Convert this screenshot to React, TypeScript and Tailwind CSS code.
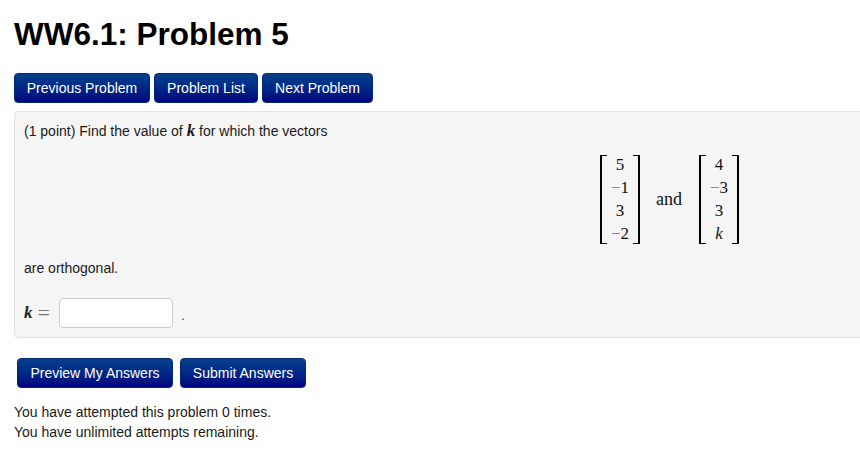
const sans = "font-['Liberation_Sans',Arial,sans-serif]";
const math = "font-['Liberation_Serif','Times_New_Roman',serif]";

function NavButton({ label, className = "" }: { label: string; className?: string }) {
  return (
    <button
      type="button"
      className={`h-[30px] rounded-[4px] border border-[#002a6e] bg-gradient-to-b from-[#0a3f8c] to-[#00007f] text-center text-[14px] leading-[20px] text-white ${className}`}
    >
      {label}
    </button>
  );
}

function Matrix({ rows, className = "" }: { rows: React.ReactNode[]; className?: string }) {
  return (
    <div className={`relative flex h-[89px] flex-col items-center justify-center ${className}`}>
      <span className="absolute left-0 top-0 h-[89px] w-[7px] border-y border-l-2 border-black" />
      <span className="absolute right-0 top-0 h-[89px] w-[7px] border-y border-r-2 border-black" />
      {rows.map((row, i) => (
        <div key={i} className={`flex h-[23px] shrink-0 items-center text-[17px] text-[#111] ${math}`}>
          {row}
        </div>
      ))}
    </div>
  );
}

function Neg({ n }: { n: number }) {
  return (
    <>
      <span className="text-[#777]">−</span>
      {n}
    </>
  );
}

export default function App() {
  return (
    <div className={`h-[474px] w-[860px] overflow-hidden bg-white text-[#1a1a1a] ${sans}`}>
      <div className="pl-[14px] pt-[14px]">
        <h1 className="text-[31.5px] font-bold leading-[40px] text-black">WW6.1: Problem 5</h1>

        <div className="mt-[19px] flex gap-[4px]">
          <NavButton label="Previous Problem" className="w-[136px]" />
          <NavButton label="Problem List" className="w-[104px]" />
          <NavButton label="Next Problem" className="w-[111px]" />
        </div>

        <section className="mt-[8px] h-[227px] w-[900px] rounded-l-[4px] border border-[#e3e3e3] bg-[#f5f5f5] pl-[9px] text-[14px]">
          <p className="pt-[9px] leading-[20px]">
            (1 point) Find the value of{" "}
            <i className={`text-[17px] font-bold ${math}`}>k</i> for which the vectors
          </p>

          <div className="ml-[576px] mt-[14px] flex items-center">
            <Matrix
              rows={["5", <Neg n={1} />, "3", <Neg n={2} />]}
              className="w-[40px]"
            />
            <span className={`ml-[16px] mr-[17px] text-[18px] text-[#111] ${math}`}>and</span>
            <Matrix
              rows={["4", <Neg n={3} />, "3", <i>k</i>]}
              className="w-[40px]"
            />
          </div>

          <p className="mt-[14px] leading-[20px]">are orthogonal.</p>

          <div className="mt-[20px] flex items-center">
            <i className={`text-[17px] font-bold text-[#222] ${math}`}>k</i>
            <span className={`ml-[5px] text-[22px] leading-none text-[#777] ${math}`}>=</span>
            <input
              type="text"
              aria-label="k"
              className="ml-[9px] h-[30px] w-[114px] rounded-[4px] border border-[#cccccc] bg-white"
            />
            <span className="ml-[8px] mt-[4px] text-[#555]">.</span>
          </div>
        </section>

        <div className="ml-[3px] mt-[20px] flex gap-[7px]">
          <NavButton label="Preview My Answers" className="w-[156px]" />
          <NavButton label="Submit Answers" className="w-[126px]" />
        </div>

        <div className="mt-[14px] text-[14px] leading-[20px]">
          <p>You have attempted this problem 0 times.</p>
          <p>You have unlimited attempts remaining.</p>
        </div>
      </div>
    </div>
  );
}
